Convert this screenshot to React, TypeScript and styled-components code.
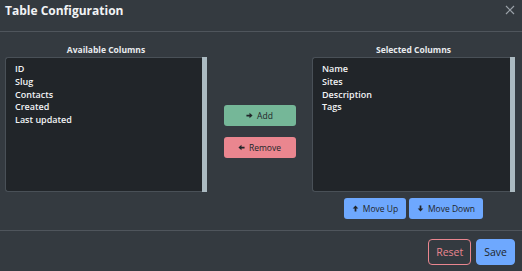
import React, { useState } from "react";
import styled, { createGlobalStyle } from "styled-components";

const GlobalStyle = createGlobalStyle`
  html, body {
    margin: 0;
    padding: 0;
    background: #343a40;
  }
  * {
    box-sizing: border-box;
  }
`;

const Modal = styled.div`
  width: 522px;
  height: 271px;
  display: flex;
  flex-direction: column;
  background: #343a40;
  color: #f8f9fa;
  font-family: "Open Sans", "Noto Sans", sans-serif;
`;

const Header = styled.div`
  height: 32px;
  display: flex;
  align-items: center;
  justify-content: space-between;
  padding: 0 7px 11px 5px;
  border-bottom: 1px solid #4f555c;
`;

const Title = styled.h5`
  margin: 0;
  font-size: 12px;
  font-weight: 700;
  color: #f1f3f5;
`;

const CloseButton = styled.button`
  background: none;
  border: none;
  padding: 0;
  width: 10px;
  height: 10px;
  display: flex;
  cursor: pointer;
`;

const Body = styled.div`
  flex: 1;
  display: flex;
  padding: 11px 7px 0 5px;
`;

const Column = styled.div`
  display: flex;
  flex-direction: column;
  width: ${(p: { $width: number }) => p.$width}px;
`;

const Label = styled.div`
  height: 14px;
  padding-top: 1px;
  line-height: 12px;
  text-align: center;
  font-size: 8.5px;
  font-weight: 700;
  color: #e9ecef;
`;

const ListBox = styled.div`
  height: 135px;
  display: flex;
  background: #212529;
  border: 1px solid #495057;
  border-right: none;
  border-radius: 3px 0 0 3px;
`;

const Items = styled.ul`
  flex: 1;
  margin: 0;
  padding: 5px 0 0 9px;
  list-style: none;
`;

const Item = styled.li`
  font-size: 9px;
  font-weight: 600;
  line-height: 12.75px;
  color: #f1f3f5;
`;

const Scrollbar = styled.div`
  width: 5px;
  margin: -1px 0;
  background: #abbac1;
`;

const Middle = styled.div`
  flex: 1;
  display: flex;
  flex-direction: column;
  align-items: center;
  gap: 11px;
  padding-top: 62px;
`;

const ActionButton = styled.button<{ $tone: "green" | "red" }>`
  width: 72px;
  height: 21px;
  display: flex;
  align-items: center;
  justify-content: center;
  gap: 4px;
  border: none;
  border-radius: 3px;
  background: ${(p) => (p.$tone === "green" ? "#75b798" : "#ea868f")};
  color: #212529;
  font-family: inherit;
  font-size: 8.5px;
  cursor: pointer;
`;

const MoveRow = styled.div`
  display: flex;
  justify-content: center;
  gap: 3px;
  margin-top: 6px;
`;

const MoveButton = styled.button<{ $width: number }>`
  width: ${(p) => p.$width}px;
  height: 21px;
  display: flex;
  align-items: center;
  justify-content: center;
  gap: 4px;
  border: none;
  border-radius: 3px;
  background: #6ea8fe;
  color: #212529;
  font-family: inherit;
  font-size: 8.5px;
  cursor: pointer;
`;

const Footer = styled.div`
  height: 41px;
  display: flex;
  justify-content: flex-end;
  align-items: center;
  gap: 5px;
  padding: 1px 7px 0 0;
  border-top: 1px solid #4f555c;
`;

const FooterButton = styled.button<{ $variant: "outline" | "primary" }>`
  height: 26px;
  padding: 0 7px;
  border-radius: 4px;
  font-family: inherit;
  font-size: 10.5px;
  cursor: pointer;
  border: 1px solid
    ${(p) => (p.$variant === "outline" ? "#ea868f" : "#6ea8fe")};
  background: ${(p) => (p.$variant === "outline" ? "transparent" : "#6ea8fe")};
  color: ${(p) => (p.$variant === "outline" ? "#ea868f" : "#212529")};
`;

const Arrow = ({ dir }: { dir: "right" | "left" | "up" | "down" }) => {
  const rot = { right: 0, down: 90, left: 180, up: 270 }[dir];
  return (
    <svg width="7" height="7" viewBox="0 0 8 8" style={{ transform: `rotate(${rot}deg)` }}>
      <path d="M0.5 3h3.5V0.8L7.5 4 4 7.2V5H0.5z" fill="#212529" />
    </svg>
  );
};

const App = () => {
  const [available] = useState(["ID", "Slug", "Contacts", "Created", "Last updated"]);
  const [selected] = useState(["Name", "Sites", "Description", "Tags"]);

  return (
    <Modal>
      <GlobalStyle />
      <Header>
        <Title>Table Configuration</Title>
        <CloseButton aria-label="Close">
          <svg width="10" height="10" viewBox="0 0 10 10">
            <path d="M1 1l8 8M9 1l-8 8" stroke="#9aa1a8" strokeWidth="1.2" />
          </svg>
        </CloseButton>
      </Header>
      <Body>
        <Column $width={202}>
          <Label>Available Columns</Label>
          <ListBox>
            <Items>
              {available.map((c) => (
                <Item key={c}>{c}</Item>
              ))}
            </Items>
            <Scrollbar />
          </ListBox>
        </Column>
        <Middle>
          <ActionButton $tone="green">
            <Arrow dir="right" /> Add
          </ActionButton>
          <ActionButton $tone="red">
            <Arrow dir="left" /> Remove
          </ActionButton>
        </Middle>
        <Column $width={203}>
          <Label>Selected Columns</Label>
          <ListBox>
            <Items>
              {selected.map((c) => (
                <Item key={c}>{c}</Item>
              ))}
            </Items>
            <Scrollbar />
          </ListBox>
          <MoveRow>
            <MoveButton $width={62}>
              <Arrow dir="up" /> Move Up
            </MoveButton>
            <MoveButton $width={74}>
              <Arrow dir="down" /> Move Down
            </MoveButton>
          </MoveRow>
        </Column>
      </Body>
      <Footer>
        <FooterButton $variant="outline">Reset</FooterButton>
        <FooterButton $variant="primary">Save</FooterButton>
      </Footer>
    </Modal>
  );
};

export default App;
